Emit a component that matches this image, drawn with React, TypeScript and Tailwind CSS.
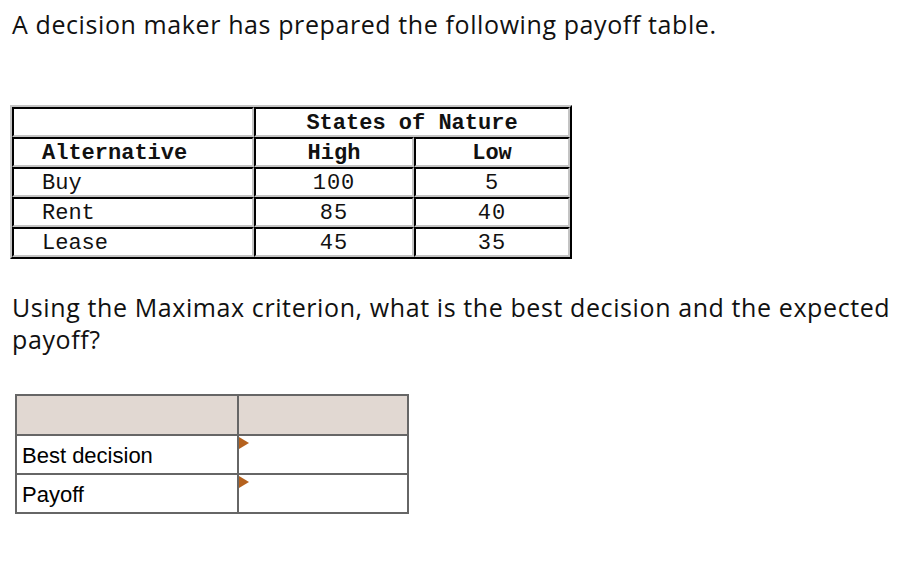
import React from "react";

const mono = { fontFamily: '"Liberation Mono", "Courier New", monospace' };

export default function App() {
  const cell =
    "h-[30px] p-0 pt-[4px] leading-[20px] border-2 border-t-black border-l-black border-r-[#c4c4c4] border-b-[#c4c4c4] align-middle";
  const rows: [string, string, string][] = [
    ["Buy", "100", "5"],
    ["Rent", "85", "40"],
    ["Lease", "45", "35"],
  ];
  return (
    <div className="w-[910px] h-[566px] bg-white text-[#111] font-['Open_Sans',sans-serif]">
      <div className="pl-[12px] pt-[6px]">
        <p className="text-[25px] leading-[36px] tracking-[0.6px]">
          A decision maker has prepared the following payoff table.
        </p>
        <div className="mt-[63px] ml-[-2px]">
          <table
            className="border-separate border-spacing-0 border-2 border-t-[#c4c4c4] border-l-[#c4c4c4] border-r-black border-b-black text-[22px]"
            style={mono}
          >
            <tbody>
              <tr>
                <td className={`${cell} w-[242px]`}></td>
                <td className={`${cell} text-center font-bold`} colSpan={2}>
                  States of Nature
                </td>
              </tr>
              <tr>
                <td className={`${cell} w-[242px] pl-[28px] font-bold`}>Alternative</td>
                <td className={`${cell} w-[160px] text-center font-bold`}>High</td>
                <td className={`${cell} w-[156px] text-center font-bold`}>Low</td>
              </tr>
              {rows.map(([a, h, l]) => (
                <tr key={a}>
                  <td className={`${cell} pl-[28px]`}>{a}</td>
                  <td className={`${cell} text-center tracking-[1px]`}>{h}</td>
                  <td className={`${cell} text-center tracking-[1px]`}>{l}</td>
                </tr>
              ))}
            </tbody>
          </table>
        </div>
        <p className="mt-[32px] text-[25px] leading-[32px] tracking-[0.6px] pr-[8px]">
          Using the Maximax criterion, what is the best decision and the expected payoff?
        </p>
        <table
          className="mt-[39px] ml-[3px] border-collapse border-2 border-[#666] text-[22px] leading-[24px] font-['Liberation_Sans',Arial,sans-serif]"
        >
          <tbody>
            <tr className="bg-[#e1d8d2]">
              <td className="h-[40px] w-[222px] border-2 border-[#666]"></td>
              <td className="h-[40px] w-[170px] border-2 border-[#666]"></td>
            </tr>
            {["Best decision", "Payoff"].map((t) => (
              <tr key={t}>
                <td className="h-[39px] border-2 border-[#666] pl-[5px] pt-[3px] text-black">{t}</td>
                <td className="h-[39px] border-2 border-[#666] relative p-0">
                  <span className="absolute left-0 top-[1px] w-0 h-0 border-y-[6px] border-y-transparent border-l-[10px] border-l-[#b5621e]"></span>
                </td>
              </tr>
            ))}
          </tbody>
        </table>
      </div>
    </div>
  );
}
